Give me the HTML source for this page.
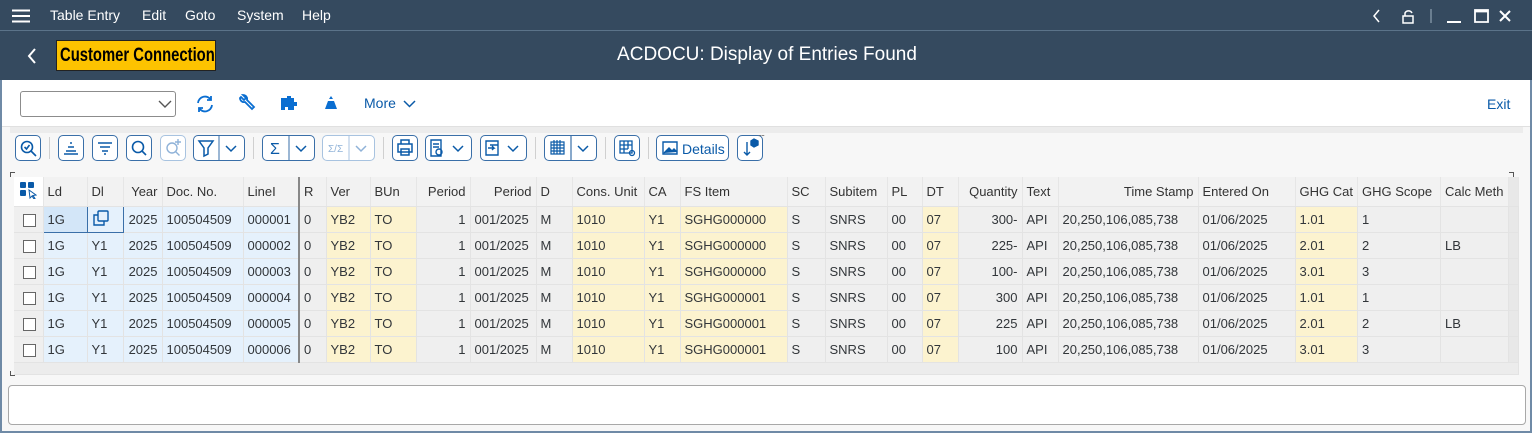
<!DOCTYPE html>
<html><head><meta charset="utf-8"><style>
*{box-sizing:border-box;margin:0;padding:0}
body{width:1532px;height:433px;overflow:hidden;background:#f7f7f7;font-family:"Liberation Sans",Arial,sans-serif;font-size:13px;color:#32363a;position:relative}
.menu{position:absolute;left:0;top:0;width:1532px;height:31px;background:#354a5f;border-bottom:1px solid #5b7389;color:#fff;font-size:14px}
.menu span{position:absolute;top:7px}
.title{position:absolute;left:0;top:31px;width:1532px;height:49px;background:#354a5f;color:#fff}
.tb{position:absolute;left:0;top:80px;width:1532px;height:47px;background:#fff;border-bottom:1px solid #e0e0e0}
.btn{position:absolute;top:135px;height:26px;border:1px solid #3a6fa8;border-radius:5px;background:#fff;color:#0a5aa8}
.btn svg{position:absolute}
.sep{position:absolute;top:137px;width:1px;height:22px;background:#d0d0d0}
table{position:absolute;left:14px;top:177px;border-collapse:collapse;table-layout:fixed;background:#f0f0f0}
td,th{height:26px;padding:0 4px;white-space:nowrap;overflow:hidden;border-right:1px solid #e3e3e3;border-bottom:1px solid #e3e3e3;font-weight:normal;text-align:left}
th{height:29px;background:#f2f2f2;color:#333;border-right:1px solid #e6e6e6}
td{background:#efefef}
.r{text-align:right}
.k{background:#e5f1fc}
.y{background:#fcf3cf}
.cb{display:inline-block;width:13px;height:13px;border:1px solid #666;background:#fff;vertical-align:middle;margin-left:5px}
.status{position:absolute;left:8px;top:385px;width:1518px;height:40px;background:#fff;border:1px solid #a8a8a8;border-radius:4px}
</style></head><body>
<div class="menu">
<svg style="position:absolute;left:12px;top:9px" width="18" height="14"><path d="M0 1.5h18M0 7h18M0 12.5h18" stroke="#fff" stroke-width="2"/></svg>
<span style="left:50px">Table Entry</span><span style="left:142px">Edit</span><span style="left:185px">Goto</span><span style="left:237px">System</span><span style="left:302px">Help</span>
<svg style="position:absolute;left:1372px;top:8px" width="160" height="16" fill="none" stroke="#fff" stroke-width="1.5"><path d="M7 2l-5 6 5 6"/><path d="M31 8h10v7H31z M33 8V5a4 4 0 0 1 7 0"/><path d="M59 1v14" stroke="#7d8fa0"/><path d="M75 14h14" stroke-width="2"/><path d="M103 2h13v12h-13z M103 3.5h13" stroke-width="1.8"/><path d="M128 3l10 10M138 3l-10 10" stroke-width="2"/></svg>
</div>
<div class="title">
<svg style="position:absolute;left:26px;top:16px" width="12" height="18"><path d="M9 2L3 9l6 7" stroke="#fff" stroke-width="2" fill="none"/></svg>
<div style="position:absolute;left:56px;top:9px;width:160px;height:31px;background:#fdc300;border:1px solid #222;overflow:hidden"><div style="position:absolute;left:3px;top:4px;white-space:nowrap;color:#000;font-size:19px;font-weight:bold;transform:scaleX(0.78);transform-origin:left top">Customer Connection</div></div>
<div style="position:absolute;left:0;width:1532px;top:13px;text-align:center;font-size:19px;padding-left:2px">ACDOCU: Display of Entries Found</div>
</div>
<div class="tb">
<div style="position:absolute;left:20px;top:11px;width:156px;height:26px;border:1px solid #8c8c8c;border-radius:3px"></div>
<svg style="position:absolute;left:158px;top:20px" width="14" height="9"><path d="M1 1l6 6 6-6" stroke="#555" stroke-width="1.4" fill="none"/></svg>
<svg style="position:absolute;left:195px;top:14px" width="20" height="20" fill="none" stroke="#0a6ed1" stroke-width="1.8"><path d="M3 9a7 7 0 0 1 13-3M17 11a7 7 0 0 1-13 3"/><path d="M16 2v4h-4M4 18v-4h4"/></svg>
<svg style="position:absolute;left:238px;top:14px" width="18" height="18" fill="none" stroke="#0a6ed1" stroke-width="1.8"><path d="M3 3l3 3 2-2-3-3a4 4 0 0 1 4 5l7 7-2 2-7-7a4 4 0 0 1-5-4z"/></svg>
<svg style="position:absolute;left:280px;top:14px" width="18" height="18" fill="#0a6ed1"><path d="M1 4h6v-2h4v2h3v4h3v4h-3v4H8v-3H5v3H1z"/></svg>
<svg style="position:absolute;left:323px;top:15px" width="16" height="16" fill="#0a6ed1"><path d="M8 1l2 3H6z M5 6h6l3 8H2z"/></svg>
<span style="position:absolute;left:364px;top:15px;font-size:14px;color:#0a5aa8">More</span>
<svg style="position:absolute;left:403px;top:20px" width="13" height="8"><path d="M1 1l5.5 5.5L12 1" stroke="#0a5aa8" stroke-width="1.5" fill="none"/></svg>
<span style="position:absolute;left:1487px;top:16px;font-size:14px;color:#0a5aa8">Exit</span>
</div>
<div style="position:absolute;left:10px;top:127px;width:1513px;height:6px;background:#ececec"></div>
<div class="btn" style="left:15px;width:26px"><svg width="24" height="24"><circle cx="11" cy="11" r="5.5" stroke="#0a5aa8" stroke-width="1.6" fill="none"/><path d="M15 15l5 5M8.5 11l2 2 3-4" stroke="#0a5aa8" stroke-width="1.6" fill="none"/></svg></div>
<div class="sep" style="left:49px"></div>
<div class="btn" style="left:58px;width:26px"><svg width="24" height="24" stroke="#0a5aa8" stroke-width="1.4"><path d="M11 7h2M9 11h6M7 15h10M5 18h14"/></svg></div>
<div class="btn" style="left:92px;width:26px"><svg width="24" height="24" stroke="#0a5aa8" stroke-width="1.4"><path d="M5 7h14M7 11h10M9 15h6M11 18h2"/></svg></div>
<div class="btn" style="left:126px;width:26px"><svg width="24" height="24" fill="none" stroke="#0a5aa8" stroke-width="1.6"><circle cx="11" cy="11" r="5.5"/><path d="M15 15l4 4"/></svg></div>
<div class="btn" style="left:160px;width:26px;border-color:#a8c3e0"><svg width="24" height="24" fill="none" stroke="#8fb2d8" stroke-width="1.4"><circle cx="11" cy="12" r="5"/><path d="M14.5 15.5l4 4M17 3v6M14 6h6"/></svg></div>
<div class="btn" style="left:193px;width:52px"><svg width="52" height="24" fill="none" stroke="#0a5aa8" stroke-width="1.5"><path d="M5 5h14l-5 7v6l-4 2v-8z"/><path d="M25 0v24" stroke="#3a6fa8" stroke-width="1"/><path d="M32 10l5 5 5-5"/></svg></div>
<div class="sep" style="left:253px"></div>
<div class="btn" style="left:262px;width:53px"><svg width="52" height="24"><text x="7" y="18" font-size="16" fill="#0a5aa8" font-family="Liberation Sans">Σ</text><path d="M26 0v24" stroke="#3a6fa8"/><path d="M33 10l5 5 5-5" stroke="#0a5aa8" stroke-width="1.5" fill="none"/></svg></div>
<div class="btn" style="left:322px;width:53px;border-color:#a8c3e0"><svg width="52" height="24"><text x="5" y="16" font-size="10" fill="#8fb2d8" font-family="Liberation Sans">Σ/Σ</text><path d="M26 0v24" stroke="#a8c3e0"/><path d="M33 10l5 5 5-5" stroke="#8fb2d8" stroke-width="1.5" fill="none"/></svg></div>
<div class="sep" style="left:383px"></div>
<div class="btn" style="left:392px;width:26px"><svg width="24" height="24" fill="none" stroke="#0a5aa8" stroke-width="1.5"><path d="M8 8V4h8v4M5 8h14v8H5zM8 13h8v6H8z"/></svg></div>
<div class="btn" style="left:425px;width:47px"><svg width="46" height="24" fill="none" stroke="#0a5aa8" stroke-width="1.4"><path d="M5 4h10v16H5zM7 8h6M7 11h6"/><circle cx="13" cy="16" r="3"/><path d="M27 10l5 5 5-5" stroke-width="1.5"/></svg></div>
<div class="btn" style="left:480px;width:47px"><svg width="46" height="24" fill="none" stroke="#0a5aa8" stroke-width="1.4"><path d="M5 5h12v14H5zM9 9h8v10M7 12h6l-2-2M13 12l-2 2"/><path d="M27 10l5 5 5-5" stroke-width="1.5"/></svg></div>
<div class="sep" style="left:535px"></div>
<div class="btn" style="left:544px;width:53px"><svg width="52" height="24" fill="none" stroke="#0a5aa8" stroke-width="1.2"><path d="M6 6h13v12H6zM6 9h13M6 12h13M6 15h13M9 4v14M12 4v14M15 4v14"/><path d="M26 0v24" stroke="#3a6fa8"/><path d="M33 10l5 5 5-5" stroke-width="1.5"/></svg></div>
<div class="sep" style="left:605px"></div>
<div class="btn" style="left:614px;width:26px"><svg width="24" height="24" fill="none" stroke="#0a5aa8" stroke-width="1.3"><path d="M5 5h12v12H5zM5 9h12M5 13h8M9 5v12M13 5v8"/><circle cx="17" cy="17" r="2.5"/></svg></div>
<div class="sep" style="left:648px"></div>
<div class="btn" style="left:656px;width:73px"><svg width="26" height="24" fill="none" stroke="#0a5aa8" stroke-width="1.4"><path d="M6 6h14v12H6z"/><path d="M7 17l5-5 3 3 2-2 3 3" fill="#0a5aa8"/></svg><span style="position:absolute;left:25px;top:5px;font-size:14px">Details</span></div>
<div class="btn" style="left:737px;width:26px"><svg width="24" height="24" fill="none" stroke="#0a5aa8" stroke-width="1.4"><path d="M9 6v13M6 16l3 3 3-3"/><path d="M13 5l3-2 4 2v4l-4 2-3-2z" fill="#0a5aa8"/></svg></div>
<div style="position:absolute;left:758px;top:128px;color:#555;font-size:9px;letter-spacing:-1px">....</div>
<div style="position:absolute;left:10px;top:172px;width:5px;height:5px;border-left:1px solid #555;border-top:1px solid #555"></div>
<div style="position:absolute;left:1509px;top:172px;width:5px;height:5px;border-right:1px solid #555;border-top:1px solid #555"></div>
<div style="position:absolute;left:10px;top:371px;width:5px;height:5px;border-left:1px solid #555;border-bottom:1px solid #555"></div>
<table>
<colgroup><col style="width:29px"><col style="width:44px"><col style="width:36px"><col style="width:39px"><col style="width:81px"><col style="width:56px"><col style="width:27px"><col style="width:44px"><col style="width:46px"><col style="width:54px"><col style="width:66px"><col style="width:36px"><col style="width:72px"><col style="width:36px"><col style="width:107px"><col style="width:38px"><col style="width:62px"><col style="width:35px"><col style="width:36px"><col style="width:64px"><col style="width:36px"><col style="width:140px"><col style="width:97px"><col style="width:62px"><col style="width:83px"><col style="width:67px"><col style="width:10px"></colgroup>
<tr><th style="background:#fff;padding:0 0 0 5px"><svg width="18" height="18" fill="#0a5aa8"><rect x="1" y="1" width="6" height="6" rx="1"/><rect x="9" y="1" width="6" height="6" rx="1"/><rect x="1" y="9" width="6" height="6" rx="1"/><path d="M10 9l7 5-3 .5 2 3-1 .5-2-3-2 2z" fill="none" stroke="#0a5aa8"/></svg></th><th>Ld</th><th>Dl</th><th class="r">Year</th><th>Doc. No.</th><th>LineI</th><th style="border-left:2px solid #888">R</th><th>Ver</th><th>BUn</th><th class="r">Period</th><th class="r">Period</th><th>D</th><th>Cons. Unit</th><th>CA</th><th>FS Item</th><th>SC</th><th>Subitem</th><th>PL</th><th>DT</th><th class="r">Quantity</th><th>Text</th><th class="r">Time Stamp</th><th>Entered On</th><th class="r">GHG Cat</th><th>GHG Scope</th><th>Calc Meth</th><th style="background:#e8e8e8"></th></tr>
<tr><td><span class="cb"></span></td><td class="k" style="border:1px solid #3a6fa8;background:#d3e6f8">1G</td><td class="k" style="border:1px solid #3a6fa8;border-radius:4px"><svg width="18" height="18" fill="none" stroke="#0a5aa8" stroke-width="1.4"><rect x="6" y="2" width="10" height="10" rx="1"/><path d="M6 6H2v10h10v-4"/></svg></td><td class="k r">2025</td><td class="k">100504509</td><td class="k">000001</td><td style="border-left:2px solid #888">0</td><td class="y">YB2</td><td class="y">TO</td><td class="r">1</td><td>001/2025</td><td>M</td><td class="y">1010</td><td class="y">Y1</td><td class="y">SGHG000000</td><td>S</td><td>SNRS</td><td>00</td><td class="y">07</td><td class="r">300-</td><td>API</td><td>20,250,106,085,738</td><td>01/06/2025</td><td class="y">1.01</td><td>1</td><td></td><td style="background:#e8e8e8"></td></tr>
<tr><td><span class="cb"></span></td><td class="k">1G</td><td class="k">Y1</td><td class="k r">2025</td><td class="k">100504509</td><td class="k">000002</td><td style="border-left:2px solid #888">0</td><td class="y">YB2</td><td class="y">TO</td><td class="r">1</td><td>001/2025</td><td>M</td><td class="y">1010</td><td class="y">Y1</td><td class="y">SGHG000000</td><td>S</td><td>SNRS</td><td>00</td><td class="y">07</td><td class="r">225-</td><td>API</td><td>20,250,106,085,738</td><td>01/06/2025</td><td class="y">2.01</td><td>2</td><td>LB</td><td style="background:#e8e8e8"></td></tr>
<tr><td><span class="cb"></span></td><td class="k">1G</td><td class="k">Y1</td><td class="k r">2025</td><td class="k">100504509</td><td class="k">000003</td><td style="border-left:2px solid #888">0</td><td class="y">YB2</td><td class="y">TO</td><td class="r">1</td><td>001/2025</td><td>M</td><td class="y">1010</td><td class="y">Y1</td><td class="y">SGHG000000</td><td>S</td><td>SNRS</td><td>00</td><td class="y">07</td><td class="r">100-</td><td>API</td><td>20,250,106,085,738</td><td>01/06/2025</td><td class="y">3.01</td><td>3</td><td></td><td style="background:#e8e8e8"></td></tr>
<tr><td><span class="cb"></span></td><td class="k">1G</td><td class="k">Y1</td><td class="k r">2025</td><td class="k">100504509</td><td class="k">000004</td><td style="border-left:2px solid #888">0</td><td class="y">YB2</td><td class="y">TO</td><td class="r">1</td><td>001/2025</td><td>M</td><td class="y">1010</td><td class="y">Y1</td><td class="y">SGHG000001</td><td>S</td><td>SNRS</td><td>00</td><td class="y">07</td><td class="r">300</td><td>API</td><td>20,250,106,085,738</td><td>01/06/2025</td><td class="y">1.01</td><td>1</td><td></td><td style="background:#e8e8e8"></td></tr>
<tr><td><span class="cb"></span></td><td class="k">1G</td><td class="k">Y1</td><td class="k r">2025</td><td class="k">100504509</td><td class="k">000005</td><td style="border-left:2px solid #888">0</td><td class="y">YB2</td><td class="y">TO</td><td class="r">1</td><td>001/2025</td><td>M</td><td class="y">1010</td><td class="y">Y1</td><td class="y">SGHG000001</td><td>S</td><td>SNRS</td><td>00</td><td class="y">07</td><td class="r">225</td><td>API</td><td>20,250,106,085,738</td><td>01/06/2025</td><td class="y">2.01</td><td>2</td><td>LB</td><td style="background:#e8e8e8"></td></tr>
<tr><td><span class="cb"></span></td><td class="k">1G</td><td class="k">Y1</td><td class="k r">2025</td><td class="k">100504509</td><td class="k">000006</td><td style="border-left:2px solid #888">0</td><td class="y">YB2</td><td class="y">TO</td><td class="r">1</td><td>001/2025</td><td>M</td><td class="y">1010</td><td class="y">Y1</td><td class="y">SGHG000001</td><td>S</td><td>SNRS</td><td>00</td><td class="y">07</td><td class="r">100</td><td>API</td><td>20,250,106,085,738</td><td>01/06/2025</td><td class="y">3.01</td><td>3</td><td></td><td style="background:#e8e8e8"></td></tr>
<tr><td colspan="27" style="height:12px;background:#ececec"></td></tr>
</table>
<div class="status"></div>
<div style="position:absolute;left:0;top:80px;width:2px;height:353px;background:#6f8aa6"></div>
<div style="position:absolute;right:0;top:80px;width:2px;height:353px;background:#6f8aa6"></div>
<div style="position:absolute;left:0;top:431px;width:1532px;height:2px;background:#6f8aa6"></div>
</body></html>
